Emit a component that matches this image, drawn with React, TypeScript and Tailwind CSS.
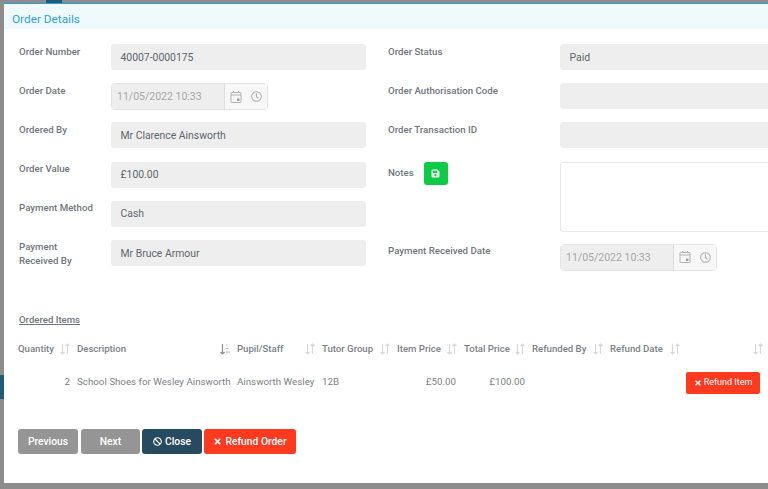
import { FaBan, FaRegClock, FaSave, FaTimes } from "react-icons/fa";
import type { ReactNode } from "react";

const labelClass = "text-[9.7px] font-medium leading-[14px] text-[#6f7680]";
const inputClass =
	"flex h-[26px] items-center rounded-[3px] bg-[#eeeeee] px-[9.5px] pt-[1px] text-[10.4px] text-[#5f666d]";

// Left column of the form
const leftRows = [
	{ label: "Order Number", value: "40007-0000175" },
	{ label: "Order Date", date: true },
	{ label: "Ordered By", value: "Mr Clarence Ainsworth" },
	{ label: "Order Value", value: "£100.00" },
	{ label: "Payment Method", value: "Cash" },
	{ label: "Payment Received By", value: "Mr Bruce Armour" },
];

const columns = [
	{ name: "Quantity" },
	{ name: "Description", sorted: true },
	{ name: "Pupil/Staff" },
	{ name: "Tutor Group" },
	{ name: "Item Price" },
	{ name: "Total Price" },
	{ name: "Refunded By" },
	{ name: "Refund Date" },
	{ name: "" },
];

const tableGrid =
	"grid grid-cols-[59px_160px_85px_75px_67px_68px_78px_77px_83px] items-center";

const SortIcon = ({ sorted }: { sorted?: boolean }) => (
	<svg width="10" height="12" viewBox="0 0 10 12" fill="none" strokeWidth="1.2" className="shrink-0">
		<path d="M2.5 1v10M.5 9l2 2 2-2" stroke={sorted ? "#8b9096" : "#d6d8da"} />
		{sorted ? (
			<path d="M6 2h1.5M6 5.5h2.5M6 9h4" stroke="#b4b7ba" />
		) : (
			<path d="M7.5 11V1M5.5 3l2-2 2 2" stroke="#d6d8da" />
		)}
	</svg>
);

const CalendarIcon = () => (
	<svg width="12" height="12" viewBox="0 0 12 12" fill="none" stroke="#b0b3b6" className="shrink-0">
		<rect x="1" y="1.5" width="10" height="10" rx="0.5" />
		<path d="M1 4h10M3.5 0v2M8.5 0v2" />
		<rect x="7" y="7.5" width="2.5" height="2.5" fill="#a0a3a6" stroke="none" />
	</svg>
);

const DateField = () => (
	<div className="flex h-[27px] w-[157px] rounded-[4px] border border-[#e4e4e4] bg-white text-[10.5px] text-[#a5a8ab]">
		<div className="flex w-[112px] items-center rounded-l-[3px] bg-[#eeeeee] pl-[5px]">11/05/2022 10:33</div>
		<div className="flex flex-1 items-center gap-[9px] border-l border-[#dddddd] bg-[#f7f7f7] pl-[5px] text-[#b0b3b6]">
			<CalendarIcon />
			<FaRegClock size={11} />
		</div>
	</div>
);

const Row = ({ label, children, className }: { label: ReactNode; children: ReactNode; className: string }) => (
	<div className={className}>
		<div className={`${labelClass} pr-[16px] pt-[0.5px]`}>{label}</div>
		{children}
	</div>
);

const FooterButton = ({ className, children }: { className: string; children: ReactNode }) => (
	<button className={`flex h-[25px] items-center justify-center gap-[3px] rounded-[3px] text-[10.3px] font-medium text-white ${className}`}>
		{children}
	</button>
);

export default function App() {
	return (
		<div
			className="relative h-[489px] w-[768px] overflow-hidden bg-[#8c8c8c] pl-[4px] pt-[3px] text-[#6f7680]"
			style={{ fontFamily: "Roboto, sans-serif" }}
		>
			{/* bits of the page behind the modal */}
			<div className="absolute left-[46px] top-0 h-[3px] w-[16px] bg-[#1d5d78]" />
			<div className="absolute left-0 top-[375px] h-[24px] w-[4px] bg-[#1d5d78]" />

			<div className="h-[480px] w-[800px] border-t border-[#2f9fd0] bg-white">
				<div className="flex h-[25px] items-center bg-[#eefaff] pl-[8px] pt-[6px] text-[11.8px] text-[#2f9fdc]">
					Order Details
				</div>

				<div className="flex pl-[15px] pt-[15px]">
					<div className="w-[347px]">
						{leftRows.map((row) => (
							<Row key={row.label} label={row.label} className="grid h-[39.2px] grid-cols-[92px_255px]">
								{row.date ? <DateField /> : <div className={inputClass}>{row.value}</div>}
							</Row>
						))}
					</div>

					<div className="ml-[22px] w-[400px]">
						<Row label="Order Status" className="grid h-[39.2px] grid-cols-[172px_228px]">
							<div className={`${inputClass} text-[#4f9a5c]`}>Paid</div>
						</Row>
						<Row label="Order Authorisation Code" className="grid h-[39.2px] grid-cols-[172px_228px]">
							<div className={inputClass} />
						</Row>
						<Row label="Order Transaction ID" className="grid h-[39.2px] grid-cols-[172px_228px]">
							<div className={inputClass} />
						</Row>
						<div className="grid h-[82.4px] grid-cols-[172px_228px]">
							<div className="flex items-start gap-[10px]">
								<div className={`${labelClass} pt-[4px]`}>Notes</div>
								<button className="flex h-[23px] w-[24px] items-center justify-center rounded-[3px] bg-[#0ccb45] text-white">
									<FaSave size={9} />
								</button>
							</div>
							<div className="h-[70px] rounded-[3px] border border-[#e8e8e8] bg-white" />
						</div>
						<Row label="Payment Received Date" className="grid h-[30px] grid-cols-[172px_228px]">
							<DateField />
						</Row>
					</div>
				</div>

				<div className="ml-[15px] mt-[34px] text-[9.6px] font-medium leading-[14px] text-[#6f7680] underline">
					Ordered Items
				</div>

				<div className={`${tableGrid} ml-[14px] mt-[14px] h-[16px]`}>
					{columns.map((col) => (
						<div key={col.name} className="flex items-center justify-between whitespace-nowrap pr-[7px] text-[9.6px] font-medium text-[#7a8087]">
							<span>{col.name}</span>
							<SortIcon sorted={col.sorted} />
						</div>
					))}
				</div>

				<div className={`${tableGrid} ml-[14px] mt-[14px] h-[22px] text-[9.75px] text-[#7a8087]`}>
					<div className="pr-[7px] text-right">2</div>
					<div className="whitespace-nowrap">School Shoes for Wesley Ainsworth</div>
					<div className="whitespace-nowrap">Ainsworth Wesley</div>
					<div>12B</div>
					<div className="pr-[8px] text-right">£50.00</div>
					<div className="pr-[7px] text-right">£100.00</div>
					<div />
					<div />
					<div className="relative">
						<button className="absolute right-[10px] top-[-10px] flex h-[22px] w-[74px] items-center justify-center gap-[2px] rounded-[2px] bg-[#ff3a1f] text-[9px] text-white">
							<FaTimes size={8} />
							Refund Item
						</button>
					</div>
				</div>

				<div className="ml-[14px] mt-[36px] flex gap-[2px]">
					<FooterButton className="w-[60px] bg-[#959595] text-[#e6e6e6]">Previous</FooterButton>
					<FooterButton className="ml-[1px] w-[59px] bg-[#959595] text-[#e6e6e6]">Next</FooterButton>
					<FooterButton className="w-[60px] bg-[#264a60]">
						<FaBan size={9} />
						Close
					</FooterButton>
					<FooterButton className="w-[92px] bg-[#ff3a1f]">
						<FaTimes size={9} />
						Refund Order
					</FooterButton>
				</div>
			</div>
		</div>
	);
}
